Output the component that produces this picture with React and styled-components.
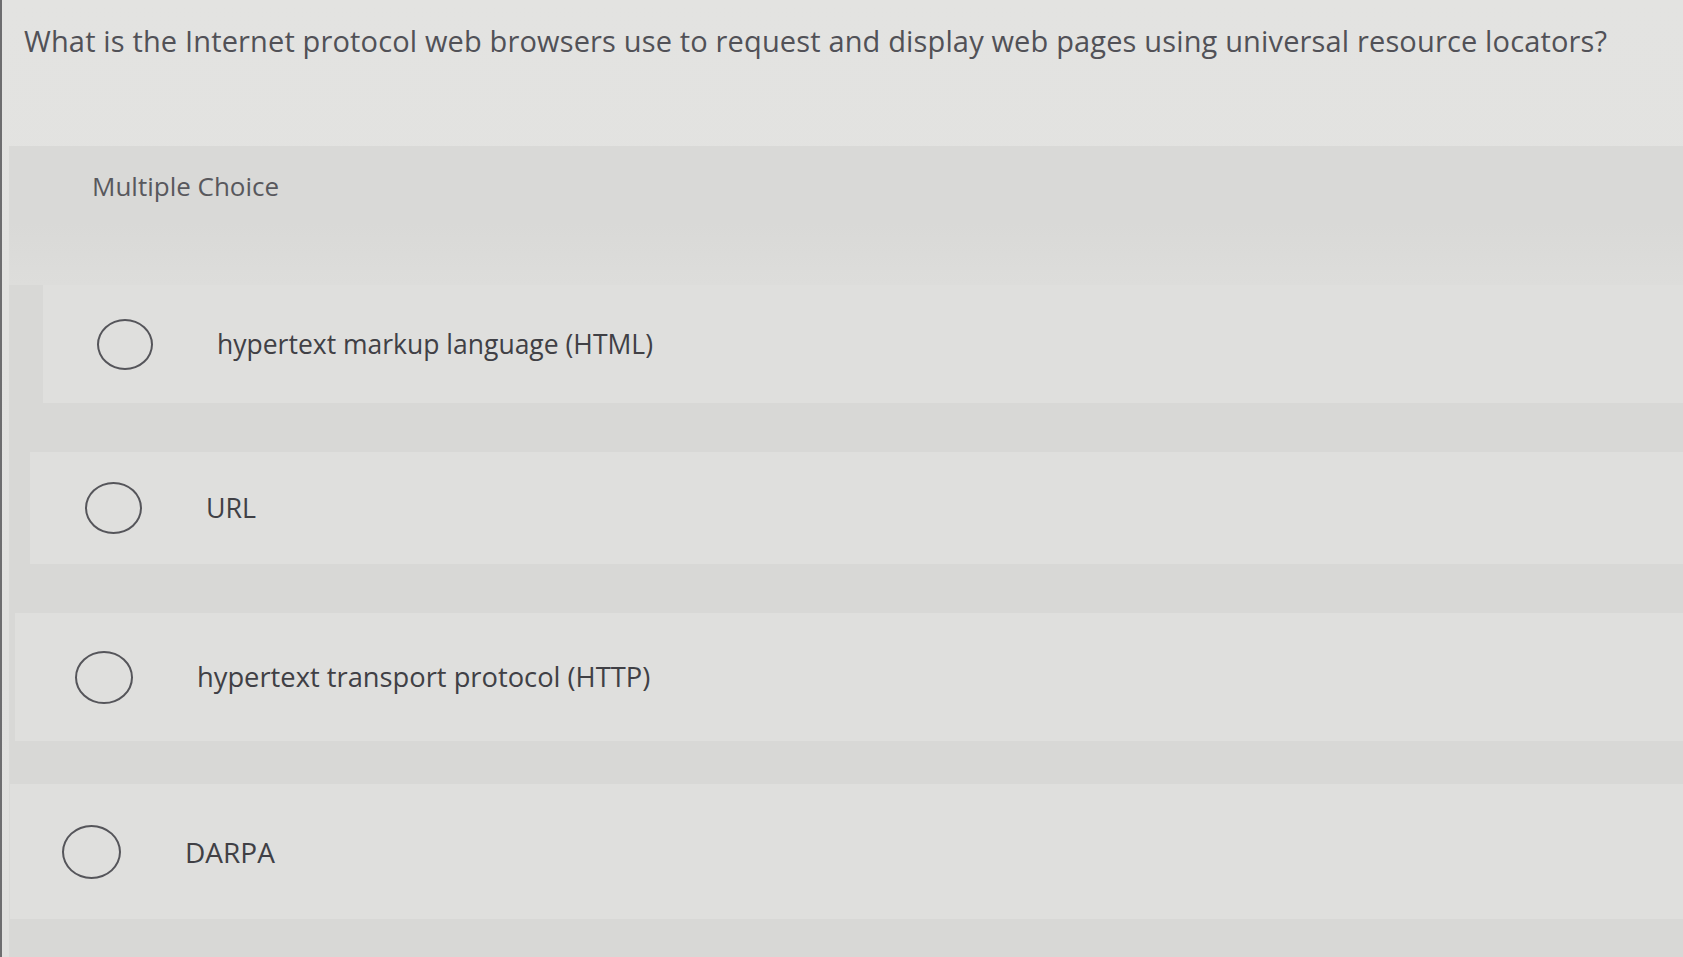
import styled, { createGlobalStyle } from 'styled-components';

const GlobalStyle = createGlobalStyle`
  html, body {
    margin: 0;
    padding: 0;
    background: #e2e2e0;
  }
  body {
    font-family: "Open Sans", "Liberation Sans", sans-serif;
  }
`;

// the photo is taken at a slight angle, so lower rows sit further left and read larger
const options = [
  { label: 'hypertext markup language (HTML)', band: 34, inset: 54, height: 118, gap: 49, size: 26.5, ring: 56 },
  { label: 'URL', band: 21, inset: 55, height: 112, gap: 49, size: 26.8, ring: 57 },
  { label: 'hypertext transport protocol (HTTP)', band: 6, inset: 60, height: 128, gap: 43, size: 27.3, ring: 58 },
  { label: 'DARPA', band: 1, inset: 52, height: 135, gap: 0, size: 28, ring: 59 },
];

const Page = styled.div`
  display: flex;
  flex-direction: column;
  height: 957px;
  overflow: hidden;
  border-left: 2px solid #6d6d6f;
  background: linear-gradient(180deg, #e3e3e1 0%, #e0e0de 100%);
`;

const Question = styled.h1`
  margin: 0;
  padding: 22px 0 0 22px;
  height: 146px;
  box-sizing: border-box;
  font-size: 29px;
  font-weight: 400;
  line-height: 38px;
  letter-spacing: 0.15px;
  color: #515157;
  white-space: nowrap;
`;

const Panel = styled.section`
  flex: 1;
  margin-left: 7px;
  display: flex;
  flex-direction: column;
  background: #d8d8d6;
`;

const PanelHeader = styled.div`
  padding: 22px 0 0 83px;
  height: 139px;
  box-sizing: border-box;
  font-size: 26px;
  line-height: 36px;
  color: #58585d;
  background: linear-gradient(180deg, #d9d9d7 0%, #d9d9d7 55%, #dddddb 100%);
`;

const OptionList = styled.div`
  display: flex;
  flex-direction: column;
`;

const OptionRow = styled.label`
  display: flex;
  align-items: center;
  gap: 64px;
  height: ${(p) => p.$height}px;
  margin-left: ${(p) => p.$band}px;
  margin-bottom: ${(p) => p.$gap}px;
  padding-left: ${(p) => p.$inset}px;
  background: #dfdfdd;
  cursor: pointer;
`;

const Radio = styled.span`
  flex: none;
  width: ${(p) => p.$ring}px;
  height: ${(p) => p.$ring - 5}px;
  border: 2px solid #55555a;
  border-radius: 50%;
  box-sizing: border-box;
`;

const OptionText = styled.span`
  font-size: ${(p) => p.$size}px;
  line-height: 34px;
  color: #404045;
  white-space: nowrap;
`;

export default function App() {
  return (
    <>
      <GlobalStyle />
      <Page>
        <Question>
          What is the Internet protocol web browsers use to request and display web pages using universal resource locators?
        </Question>
        <Panel>
          <PanelHeader>Multiple Choice</PanelHeader>
          <OptionList>
            {options.map((o) => (
              <OptionRow key={o.label} $band={o.band} $inset={o.inset} $height={o.height} $gap={o.gap}>
                <Radio $ring={o.ring} />
                <OptionText $size={o.size}>{o.label}</OptionText>
              </OptionRow>
            ))}
          </OptionList>
        </Panel>
      </Page>
    </>
  );
}
